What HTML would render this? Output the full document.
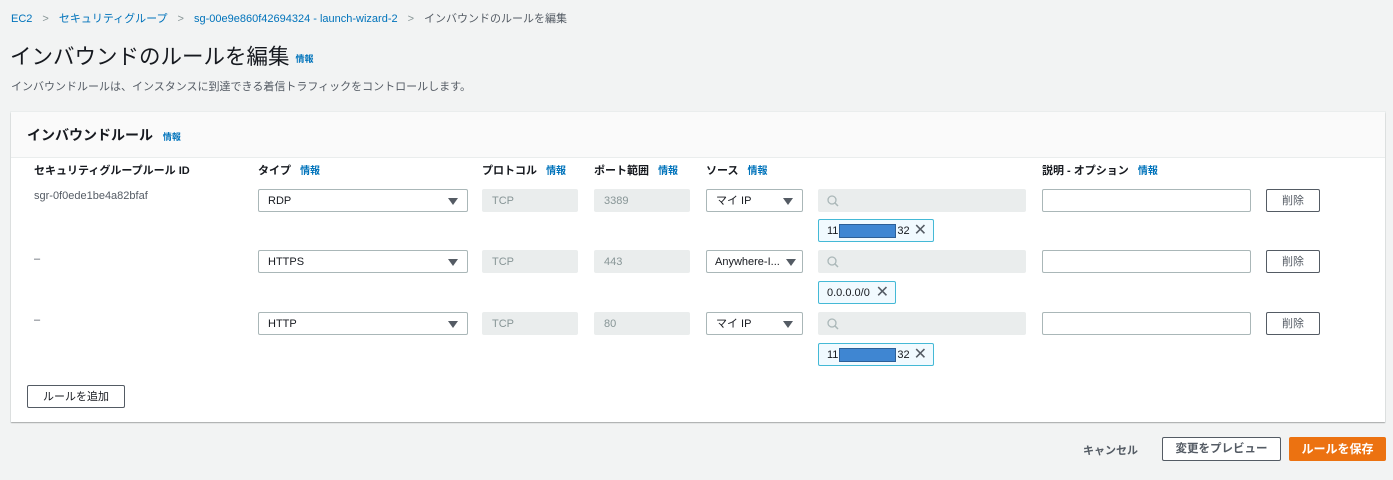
<!DOCTYPE html>
<html><head><meta charset="utf-8"><style>
body{margin:0;width:1393px;height:480px;background:#f2f3f3;font-family:"Liberation Sans","Noto Sans CJK JP",sans-serif;font-size:12px;color:#16191f;position:relative;overflow:hidden}
.a{position:absolute;white-space:nowrap}
.l{color:#0073bb}
.info{color:#0073bb;font-size:10px;font-weight:bold}
.in{position:absolute;border:1px solid #aab7b8;background:#fff;border-radius:2px;box-sizing:border-box;height:23px;font-size:11px;line-height:23px;padding-left:9px}
.dis{position:absolute;height:23px;background:#eaeded;border-radius:2px;color:#879596;font-size:11px;line-height:24px;padding-left:10px;box-sizing:border-box}
.arr{position:absolute;right:9px;top:8px;width:0;height:0;border-left:5px solid transparent;border-right:5px solid transparent;border-top:7px solid #545b64}
.btn{position:absolute;border:1px solid #545b64;border-radius:2px;background:#fff;box-sizing:border-box;text-align:center;font-weight:bold;color:#545b64;font-size:11px}
.tag{position:absolute;border:1px solid #44b9d6;background:#f1faff;border-radius:2px;box-sizing:border-box;height:23px;font-size:11px;line-height:22px;padding-left:8px}
.x{position:absolute;right:6px;top:0;font-size:16px;color:#545b64}
.th{position:absolute;top:162px;font-weight:bold;font-size:11px}
.del{font-weight:normal;color:#545b64}
</style></head><body>
<div class="a" style="left:11px;top:10px;font-size:11px"><span class="l">EC2</span><span style="color:#879596;margin:0 10px">&gt;</span><span class="l">セキュリティグループ</span><span style="color:#879596;margin:0 10px">&gt;</span><span class="l">sg-00e9e860f42694324 - launch-wizard-2</span><span style="color:#879596;margin:0 10px">&gt;</span><span style="color:#545b64">インバウンドのルールを編集</span></div>
<div class="a" style="left:10px;top:40px;font-size:21.5px">インバウンドのルールを編集 <span class="info" style="font-size:9px;vertical-align:middle">情報</span></div>
<div class="a" style="left:11px;top:78px;font-size:11px;color:#545b64">インバウンドルールは、インスタンスに到達できる着信トラフィックをコントロールします。</div>
<div class="a" style="left:11px;top:112px;width:1374px;height:310px;background:#fff;box-shadow:0 1px 1px rgba(0,0,0,.3),0 0 0 1px #eaeded"></div>
<div class="a" style="left:11px;top:112px;width:1374px;height:45px;background:#fafafa;border-bottom:1px solid #eaeded"></div>
<div class="a" style="left:27px;top:125px;font-size:14px;font-weight:bold">インバウンドルール <span class="info" style="font-size:9px;margin-left:6px">情報</span></div>
<div class="th" style="left:34px">セキュリティグループルール ID</div>
<div class="th" style="left:258px">タイプ <span class="info" style="margin-left:6px">情報</span></div>
<div class="th" style="left:482px">プロトコル <span class="info" style="margin-left:6px">情報</span></div>
<div class="th" style="left:594px">ポート範囲 <span class="info" style="margin-left:6px">情報</span></div>
<div class="th" style="left:706px">ソース <span class="info" style="margin-left:6px">情報</span></div>
<div class="th" style="left:1042px">説明 - オプション <span class="info" style="margin-left:6px">情報</span></div>

<!-- row1 -->
<div class="a" style="left:34px;top:190px;font-size:11px;color:#545b64">sgr-0f0ede1be4a82bfaf</div>
<div class="in" style="left:258px;top:189px;width:210px">RDP<div class="arr"></div></div>
<div class="dis" style="left:482px;top:189px;width:96px">TCP</div>
<div class="dis" style="left:594px;top:189px;width:96px">3389</div>
<div class="in" style="left:706px;top:189px;width:97px">マイ IP<div class="arr"></div></div>
<div class="dis" style="left:818px;top:189px;width:208px"><svg width="12" height="12" style="position:absolute;left:9px;top:6px"><circle cx="5" cy="5" r="4" fill="none" stroke="#aab7b8" stroke-width="1.3"/><line x1="8" y1="8" x2="11" y2="11" stroke="#aab7b8" stroke-width="1.5"/></svg></div>
<div class="in" style="left:1042px;top:189px;width:209px"></div>
<div class="btn del" style="left:1266px;top:189px;width:54px;height:23px;line-height:22px">削除</div>
<div class="tag" style="left:818px;top:219px;width:116px">11<span style="display:inline-block;width:55px;height:12px;background:#3f86d2;border:1px solid #2d5f96;vertical-align:middle;margin:0 1px"></span>32<span class="x">✕</span></div>

<!-- row2 -->
<div class="a" style="left:34px;top:253px;font-size:11px;color:#545b64">–</div>
<div class="in" style="left:258px;top:250px;width:210px">HTTPS<div class="arr"></div></div>
<div class="dis" style="left:482px;top:250px;width:96px">TCP</div>
<div class="dis" style="left:594px;top:250px;width:96px">443</div>
<div class="in" style="left:706px;top:250px;width:97px;padding-left:8px">Anywhere-I...<div class="arr" style="right:6px"></div></div>
<div class="dis" style="left:818px;top:250px;width:208px"><svg width="12" height="12" style="position:absolute;left:9px;top:6px"><circle cx="5" cy="5" r="4" fill="none" stroke="#aab7b8" stroke-width="1.3"/><line x1="8" y1="8" x2="11" y2="11" stroke="#aab7b8" stroke-width="1.5"/></svg></div>
<div class="in" style="left:1042px;top:250px;width:209px"></div>
<div class="btn del" style="left:1266px;top:250px;width:54px;height:23px;line-height:22px">削除</div>
<div class="tag" style="left:818px;top:281px;width:78px">0.0.0.0/0<span class="x">✕</span></div>

<!-- row3 -->
<div class="a" style="left:34px;top:314px;font-size:11px;color:#545b64">–</div>
<div class="in" style="left:258px;top:312px;width:210px">HTTP<div class="arr"></div></div>
<div class="dis" style="left:482px;top:312px;width:96px">TCP</div>
<div class="dis" style="left:594px;top:312px;width:96px">80</div>
<div class="in" style="left:706px;top:312px;width:97px">マイ IP<div class="arr"></div></div>
<div class="dis" style="left:818px;top:312px;width:208px"><svg width="12" height="12" style="position:absolute;left:9px;top:6px"><circle cx="5" cy="5" r="4" fill="none" stroke="#aab7b8" stroke-width="1.3"/><line x1="8" y1="8" x2="11" y2="11" stroke="#aab7b8" stroke-width="1.5"/></svg></div>
<div class="in" style="left:1042px;top:312px;width:209px"></div>
<div class="btn del" style="left:1266px;top:312px;width:54px;height:23px;line-height:22px">削除</div>
<div class="tag" style="left:818px;top:343px;width:116px">11<span style="display:inline-block;width:55px;height:12px;background:#3f86d2;border:1px solid #2d5f96;vertical-align:middle;margin:0 1px"></span>32<span class="x">✕</span></div>

<div class="btn" style="left:27px;top:385px;width:98px;height:23px;line-height:22px;color:#16191f;font-weight:normal">ルールを追加</div>

<div class="a" style="left:1083px;top:442px;font-weight:bold;color:#545b64;font-size:11px">キャンセル</div>
<div class="btn" style="left:1162px;top:437px;width:119px;height:24px;line-height:22px;font-size:11.5px">変更をプレビュー</div>
<div class="btn" style="left:1289px;top:437px;width:97px;height:24px;line-height:24px;font-size:12px;background:#ec7211;border:none;color:#fff">ルールを保存</div>
</body></html>
